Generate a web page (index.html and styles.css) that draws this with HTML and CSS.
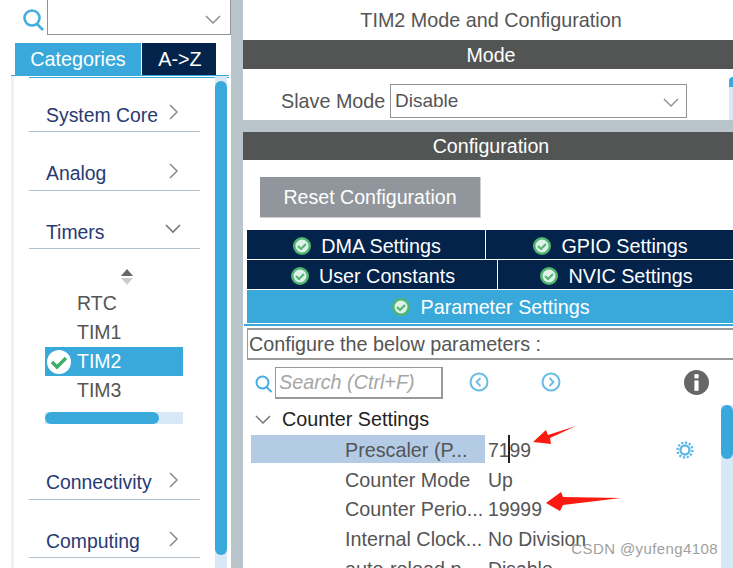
FILE: index.html
```html
<!DOCTYPE html>
<html lang="en">
<head>
<meta charset="utf-8">
<title>TIM2 Mode and Configuration</title>
<link rel="stylesheet" href="styles.css">
</head>
<body>
<div class="app">
  <aside class="side">
    <div class="side-search">
      <svg class="lens" viewBox="0 0 22 26"><circle cx="10" cy="12" r="7.5" fill="none" stroke="#45aee0" stroke-width="2.6"/><path d="M15 18l6 6" stroke="#45aee0" stroke-width="2.6"/></svg>
      <div class="combo"><svg class="chev" viewBox="0 0 16 9"><path d="M1 1l7 7 7-7" fill="none" stroke="#8a8f92" stroke-width="1.5"/></svg></div>
    </div>
    <div class="side-tabs"><div class="stab on">Categories</div><div class="stab off">A-&gt;Z</div></div>
    <div class="side-panel">
      <div class="cat"><span>System Core</span><svg class="gt" viewBox="0 0 10 16"><path d="M1 1l7 7-7 7" fill="none" stroke="#8a8f92" stroke-width="1.6"/></svg></div>
      <div class="cat"><span>Analog</span><svg class="gt" viewBox="0 0 10 16"><path d="M1 1l7 7-7 7" fill="none" stroke="#8a8f92" stroke-width="1.6"/></svg></div>
      <div class="cat"><span>Timers</span><svg class="dn" viewBox="0 0 16 10"><path d="M1 1l7 7 7-7" fill="none" stroke="#777" stroke-width="1.6"/></svg></div>
      <div class="timers">
        <svg class="sort" viewBox="0 0 12 16"><path d="M6 0l6 7H0z" fill="#666"/><path d="M6 16l6-7H0z" fill="#ccc"/></svg>
        <div class="tim">RTC</div>
        <div class="tim">TIM1</div>
        <div class="tim sel"><svg class="ok" viewBox="0 0 24 24"><circle cx="12" cy="12" r="12" fill="#fff"/><path d="M5 12l5 5 9-9" fill="none" stroke="#3fae6a" stroke-width="3.4"/></svg>TIM2</div>
        <div class="tim">TIM3</div>
        <div class="hbar"><div class="hthumb"></div></div>
      </div>
      <div class="cat"><span>Connectivity</span><svg class="gt" viewBox="0 0 10 16"><path d="M1 1l7 7-7 7" fill="none" stroke="#8a8f92" stroke-width="1.6"/></svg></div>
      <div class="cat"><span>Computing</span><svg class="gt" viewBox="0 0 10 16"><path d="M1 1l7 7-7 7" fill="none" stroke="#8a8f92" stroke-width="1.6"/></svg></div>
      <div class="vbar"><div class="vthumb"></div></div>
    </div>
  </aside>
  <main class="main">
    <section class="mode">
      <h1 class="title">TIM2 Mode and Configuration</h1>
      <div class="bar">Mode</div>
      <div class="slave">
        <span class="slave-label">Slave Mode</span>
        <div class="select">Disable<svg class="chev2" viewBox="0 0 16 9"><path d="M1 1l7 7 7-7" fill="none" stroke="#8a8f92" stroke-width="1.4"/></svg></div>
        <div class="mini-scroll"></div>
      </div>
    </section>
    <section class="config">
      <div class="bar cfg">Configuration</div>
      <button class="reset">Reset Configuration</button>
      <div class="tabs">
        <div class="tabrow r1">
          <div class="tab"><svg class="tick" viewBox="0 0 18 18"><circle cx="9" cy="9" r="9" fill="#4fb56f"/><circle cx="9" cy="9" r="6.5" fill="#dff1ea"/><path d="M5 9l3 3 5-5" fill="none" stroke="#4fb56f" stroke-width="2"/></svg>DMA Settings</div>
          <div class="tab"><svg class="tick" viewBox="0 0 18 18"><circle cx="9" cy="9" r="9" fill="#4fb56f"/><circle cx="9" cy="9" r="6.5" fill="#dff1ea"/><path d="M5 9l3 3 5-5" fill="none" stroke="#4fb56f" stroke-width="2"/></svg>GPIO Settings</div>
        </div>
        <div class="tabrow r2">
          <div class="tab"><svg class="tick" viewBox="0 0 18 18"><circle cx="9" cy="9" r="9" fill="#4fb56f"/><circle cx="9" cy="9" r="6.5" fill="#dff1ea"/><path d="M5 9l3 3 5-5" fill="none" stroke="#4fb56f" stroke-width="2"/></svg>User Constants</div>
          <div class="tab"><svg class="tick" viewBox="0 0 18 18"><circle cx="9" cy="9" r="9" fill="#4fb56f"/><circle cx="9" cy="9" r="6.5" fill="#dff1ea"/><path d="M5 9l3 3 5-5" fill="none" stroke="#4fb56f" stroke-width="2"/></svg>NVIC Settings</div>
        </div>
        <div class="tab active"><svg class="tick" viewBox="0 0 18 18"><circle cx="9" cy="9" r="9" fill="#4fb56f"/><circle cx="9" cy="9" r="6.5" fill="#dff1ea"/><path d="M5 9l3 3 5-5" fill="none" stroke="#4fb56f" stroke-width="2"/></svg>Parameter Settings</div>
      </div>
      <div class="tabline"></div>
      <div class="hint">Configure the below parameters :</div>
      <div class="tools">
        <svg class="lens2" viewBox="0 0 18 18"><circle cx="7.5" cy="7.5" r="6" fill="none" stroke="#45aee0" stroke-width="2"/><path d="M11.5 12l5 5" stroke="#45aee0" stroke-width="2"/></svg>
        <div class="find">Search (Ctrl+F)</div>
        <svg class="nav n1" viewBox="0 0 20 20"><circle cx="10" cy="10" r="8.5" fill="none" stroke="#66bce6" stroke-width="2"/><path d="M11.5 6l-4 4 4 4" fill="none" stroke="#66bce6" stroke-width="1.8"/></svg>
        <svg class="nav n2" viewBox="0 0 20 20"><circle cx="10" cy="10" r="8.5" fill="none" stroke="#66bce6" stroke-width="2"/><path d="M8.5 6l4 4-4 4" fill="none" stroke="#66bce6" stroke-width="1.8"/></svg>
        <svg class="info" viewBox="0 0 24 24"><circle cx="12" cy="12" r="12" fill="#666"/><rect x="10" y="4" width="4" height="4" fill="#fff"/><rect x="10" y="10" width="4" height="10" fill="#fff"/></svg>
      </div>
      <div class="tree">
        <div class="group"><svg class="tchev" viewBox="0 0 16 9"><path d="M1 1l7 7 7-7" fill="none" stroke="#777" stroke-width="1.5"/></svg>Counter Settings</div>
        <div class="param hi"><span class="pname">Prescaler (P...</span><span class="pval">71<i class="caret"></i>99</span>
          <svg class="gear" viewBox="0 0 18 18"><circle cx="9" cy="9" r="4.5" fill="none" stroke="#5db8e6" stroke-width="2.4"/><circle cx="9" cy="9" r="7.5" fill="none" stroke="#5db8e6" stroke-width="2.4" stroke-dasharray="2.2 1.7"/></svg></div>
        <div class="param"><span class="pname">Counter Mode</span><span class="pval">Up</span></div>
        <div class="param"><span class="pname">Counter Perio...</span><span class="pval">19999</span></div>
        <div class="param"><span class="pname">Internal Clock...</span><span class="pval">No Division</span></div>
        <div class="param"><span class="pname">auto-reload p...</span><span class="pval">Disable</span></div>
        <div class="tree-scroll"><div class="tree-thumb"></div></div>
      </div>
    </section>
  </main>
  <svg class="arrow a1" viewBox="0 0 44 22"><path d="M0 17L13 5 15 10 43 1 17 13 18 19z" fill="#fa1a10"/></svg>
  <svg class="arrow a2" viewBox="0 0 76 21"><path d="M0 12L15 1 17 6 75 7 17 14 14 20z" fill="#fa1a10"/></svg>
  <div class="mark">CSDN @yufeng4108</div>
</div>
</body>
</html>
```
FILE: styles.css
```css
* { box-sizing: border-box; }
html, body { margin: 0; padding: 0; }
body { width: 733px; height: 568px; overflow: hidden; background: #b9c4cb; font-family: "Liberation Sans", Arial, sans-serif; font-size: 19.75px; }
.app { position: relative; display: flex; width: 733px; height: 568px; overflow: hidden; gap: 12px; }

.side { width: 231px; height: 568px; background: #fff; display: flex; flex-direction: column; flex: none; }
.side-search { display: flex; height: 35px; padding-left: 22px; flex: none; }
.lens { width: 22px; height: 26px; margin-top: 6px; }
.combo { position: relative; width: 184px; height: 36px; margin-left: 3px; margin-top: -1px; border: 1px solid #8f9498; background: #fff; }
.chev { position: absolute; right: 9px; top: 15px; width: 16px; height: 9px; }
.side-tabs { display: flex; margin: 8px 0 0 15px; height: 32px; gap: 1px; flex: none; }
.stab { display: flex; align-items: center; justify-content: center; color: #fff; }
.stab.on { width: 126px; background: #39a9dc; }
.stab.off { width: 74px; padding-left: 2px; background: #03234b; }
.side-panel { position: relative; flex: 1; margin: 0 2px 0 11px; padding-left: 18px; border-top: 1px solid #39a9dc; box-shadow: inset 3px 0 0 #eef0f1, inset 0 2px 0 #fff; }
.side-panel::before { content: ""; display: block; height: 1px; background: #39a9dc; margin-top: 1px; }
.cat { position: relative; width: 171px; height: 58.5px; border-bottom: 1px solid #b4c0ca; color: #283a72; padding-left: 17px; padding-top: 29px; line-height: 24px; font-size: 19.4px; white-space: nowrap; }
.cat:first-of-type { height: 54px; padding-top: 25px; }
.gt { position: absolute; left: 140px; top: 31px; width: 10px; height: 16px; }
.cat:first-of-type .gt { top: 26px; }
.dn { position: absolute; left: 136px; top: 33px; width: 16px; height: 10px; }
.timers { height: 192px; width: 171px; padding-top: 20px; font-size: 19.5px; }
.sort { display: block; width: 12px; height: 16px; margin: 0 0 4px 92px; }
.tim { position: relative; width: 138px; height: 29px; margin-left: 16px; line-height: 29px; color: #555; padding-left: 32px; }
.tim.sel { background: #39a9dc; color: #fff; }
.ok { position: absolute; left: 2px; top: 2.5px; width: 24px; height: 24px; }
.hbar { width: 138px; height: 12px; margin: 7px 0 0 16px; background: #d8e8f6; }
.hthumb { width: 114px; height: 12px; border-radius: 6px; background: #39a9dc; }
.vbar { position: absolute; left: 204px; top: 0; bottom: 0; width: 12px; background: #d8e8f6; }
.vthumb { height: 474px; margin-top: 5px; border-radius: 6px; background: #39a9dc; }

.main { flex: 1; min-width: 0; display: flex; flex-direction: column; gap: 12px; }
.mode { height: 120px; background: #fff; position: relative; flex: none; }
.title { margin: 0; height: 40px; padding-left: 6px; line-height: 40px; font-size: 19.75px; font-weight: normal; text-align: center; color: #555; }
.bar { height: 29px; padding-left: 6px; line-height: 30px; background: #535554; color: #fff; text-align: center; font-size: 19.6px; flex: none; }
.slave { display: flex; height: 51px; padding: 15px 0 0 38px; position: relative; }
.slave-label { color: #555; line-height: 34px; width: 109px; white-space: nowrap; }
.select { position: relative; width: 297px; height: 34px; border: 1px solid #8f9498; line-height: 32px; padding-left: 4px; color: #555; font-size: 19px; }
.chev2 { position: absolute; right: 7px; top: 13px; width: 16px; height: 9px; }
.mini-scroll { position: absolute; right: 0; top: 8px; bottom: 0; width: 4px; background: #d8e8f6; border-top: 10px solid #39a9dc; border-top-left-radius: 4px; }

.config { flex: 1; min-height: 0; background: #fff; display: flex; flex-direction: column; position: relative; }
.bar.cfg { height: 28px; line-height: 29px; }
.reset { display: block; flex: none; width: 221px; height: 41px; margin: 17px 0 0 17px; padding: 0; border: 0; border-bottom: 1px solid #ccd0d3; border-right: 1px solid #ccd0d3; background: #90969b; color: #fff; font: 19.6px "Liberation Sans", Arial, sans-serif; }
.tabs { margin: 12px 0 0 4px; display: flex; flex-direction: column; flex: none; }
.tabrow { display: grid; gap: 1px; border-bottom: 1px solid #fff; }
.r1 { grid-template-columns: 238px 1fr; height: 30px; }
.r2 { grid-template-columns: 250px 1fr; height: 30px; }
.tab { display: flex; align-items: center; justify-content: center; padding: 3px 0 0 2px; background: #03234b; color: #fff; white-space: nowrap; }
.tick { width: 18px; height: 18px; margin-right: 10px; }
.tab.active { background: #39a9dc; height: 33px; padding-top: 1px; }
.tabline { flex: none; height: 2px; margin: 1px 0 0 1px; background: #39a9dc; }
.hint { flex: none; height: 32px; margin: 2px 0 0 4px; border: 2px solid #999; border-right: 0; border-left-width: 1px; line-height: 28px; color: #555; padding-left: 1px; white-space: nowrap; }
.tools { position: relative; height: 40px; flex: none; }
.lens2 { position: absolute; left: 12px; top: 15px; width: 18px; height: 18px; }
.find { position: absolute; left: 32px; top: 7px; width: 168px; height: 32px; border: 2px solid #999; border-width: 1px 2px 2px 1px; font-style: italic; color: #a6a6a6; line-height: 28px; padding-left: 3px; white-space: nowrap; }
.nav { position: absolute; top: 12px; width: 20px; height: 20px; }
.n1 { left: 226px; } .n2 { left: 298px; }
.info { position: absolute; left: 441px; top: 10px; width: 25px; height: 25px; }
.tree { position: relative; flex: 1; color: #555; }
.group { height: 35px; line-height: 38px; padding-left: 39px; position: relative; color: #222; }
.tchev { position: absolute; left: 12px; top: 15px; width: 16px; height: 9px; }
.param { position: relative; display: flex; height: 29.7px; line-height: 30px; white-space: nowrap; margin-left: 8px; }
.param.hi { background: linear-gradient(to right, #b3cbe4 234px, transparent 234px); height: 28px; line-height: 30px; margin-bottom: 1.7px; }
.pname { width: 237px; padding-left: 94px; flex: none; overflow: hidden; }
.pval { position: relative; font-size: 19.4px; }
.caret { position: absolute; left: 20px; top: 0; width: 1.5px; height: 28px; background: #222; }
.gear { position: absolute; left: 425px; top: 6px; width: 18px; height: 18px; }
.tree-scroll { position: absolute; left: 477.5px; top: 5px; bottom: 0; width: 12px; background: #d8e8f6; }
.tree-thumb { height: 54px; border-radius: 6px; background: #39a9dc; }

.arrow { position: absolute; }
.a1 { left: 533px; top: 425px; width: 44px; height: 22px; }
.a2 { left: 546px; top: 491px; width: 76px; height: 21px; }
.mark { position: absolute; right: 15px; top: 540px; font-size: 15px; line-height: 18px; color: #8f8f8f; opacity: .85; letter-spacing: .4px; }
```
